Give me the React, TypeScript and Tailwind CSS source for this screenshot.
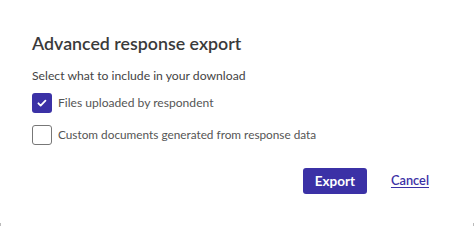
import React, { useState } from "react";

function Check({ checked }: { checked: boolean }) {
  if (checked) {
    return (
      <span className="flex h-5 w-5 shrink-0 items-center justify-center rounded-[3px] bg-[#3b31a6]">
        <svg viewBox="0 0 16 16" className="h-[12px] w-[12px]" fill="none">
          <path d="M3.2 8.4l3 3 6.4-6.6" stroke="#fff" strokeWidth="2.4" strokeLinecap="round" strokeLinejoin="round" />
        </svg>
      </span>
    );
  }
  return <span className="h-5 w-5 shrink-0 rounded-[3px] border-[1.5px] border-[#777]" />;
}

export default function App() {
  const [files, setFiles] = useState(true);
  const [custom, setCustom] = useState(false);

  return (
    <div className="flex h-[226px] w-[474px] flex-col bg-white font-['Lato',sans-serif] text-[#3f3f3f]">
      <div className="flex-1 px-8 pt-[31px]">
        <h2 className="text-[17.8px] font-semibold leading-6 text-[#3a3a3a]">Advanced response export</h2>
        <p className="mt-[13px] text-[12.2px] leading-4 text-[#444]">Select what to include in your download</p>
        <div className="mt-[9px] flex flex-col gap-[12px]">
          <label className="flex h-5 cursor-pointer items-center gap-[6px]" onClick={() => setFiles(!files)}>
            <Check checked={files} />
            <span className="text-[12.1px] leading-4 text-[#555]">Files uploaded by respondent</span>
          </label>
          <label className="flex h-5 cursor-pointer items-center gap-[6px]" onClick={() => setCustom(!custom)}>
            <Check checked={custom} />
            <span className="text-[11.8px] leading-4 text-[#555]">Custom documents generated from response data</span>
          </label>
        </div>
        <div className="mt-[23px] flex items-center justify-end gap-[24px] pr-[13px]">
          <button className="h-[26px] w-[64px] rounded-[3px] bg-[#3b31a6] text-[13.5px] font-bold text-white">Export</button>
          <button className="text-[12.8px] font-semibold text-[#3b31a6] underline underline-offset-2">Cancel</button>
        </div>
      </div>
      <div className="h-[3px] border-x border-[#bbb]" />
    </div>
  );
}
